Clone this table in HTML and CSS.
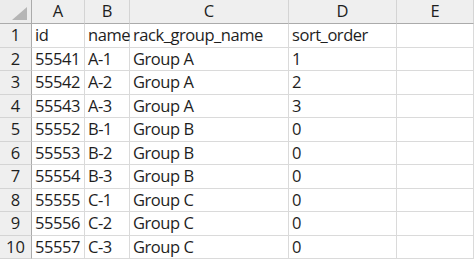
FILE: index.html
```html
<!DOCTYPE html>
<html>
<head>
<meta charset="utf-8">
<link rel="stylesheet" href="styles.css">
</head>
<body>
<div class="sheet">
  <div class="corner"><svg class="tri" width="15" height="13" viewBox="0 0 15 13"><polygon points="15,0 15,13 0,13" fill="#b5b5b5"/></svg></div>
  <div class="colh">A</div><div class="colh">B</div><div class="colh">C</div><div class="colh">D</div><div class="colh">E</div>

  <div class="rowh">1</div><div class="cell">id</div><div class="cell">name</div><div class="cell">rack_group_name</div><div class="cell">sort_order</div><div class="cell"></div>
  <div class="rowh">2</div><div class="cell">55541</div><div class="cell">A-1</div><div class="cell">Group A</div><div class="cell">1</div><div class="cell"></div>
  <div class="rowh">3</div><div class="cell">55542</div><div class="cell">A-2</div><div class="cell">Group A</div><div class="cell">2</div><div class="cell"></div>
  <div class="rowh">4</div><div class="cell">55543</div><div class="cell">A-3</div><div class="cell">Group A</div><div class="cell">3</div><div class="cell"></div>
  <div class="rowh">5</div><div class="cell">55552</div><div class="cell">B-1</div><div class="cell">Group B</div><div class="cell">0</div><div class="cell"></div>
  <div class="rowh">6</div><div class="cell">55553</div><div class="cell">B-2</div><div class="cell">Group B</div><div class="cell">0</div><div class="cell"></div>
  <div class="rowh">7</div><div class="cell">55554</div><div class="cell">B-3</div><div class="cell">Group B</div><div class="cell">0</div><div class="cell"></div>
  <div class="rowh">8</div><div class="cell">55555</div><div class="cell">C-1</div><div class="cell">Group C</div><div class="cell">0</div><div class="cell"></div>
  <div class="rowh">9</div><div class="cell">55556</div><div class="cell">C-2</div><div class="cell">Group C</div><div class="cell">0</div><div class="cell"></div>
  <div class="rowh">10</div><div class="cell">55557</div><div class="cell">C-3</div><div class="cell">Group C</div><div class="cell">0</div><div class="cell"></div>
</div>
</body>
</html>
```
FILE: styles.css
```css
html, body {
  margin: 0;
  padding: 0;
  background: #ffffff;
}
.sheet {
  display: grid;
  grid-template-columns: 32px 53px 45px 159px 108px 77px;
  grid-template-rows: 24px repeat(10, 23.5px);
  width: 474px;
  height: 260px;
  overflow: hidden;
  font-family: "Open Sans", sans-serif;
  font-size: 16.5px;
  color: #1e1e1e;
}
.corner {
  background: #ececec;
  border-right: 1px solid #ababab;
  border-bottom: 1px solid #ababab;
  position: relative;
}
.tri {
  position: absolute;
  right: 4px;
  bottom: 3px;
}
.colh {
  background: #efefef;
  border-right: 1px solid #d4d4d4;
  border-bottom: 1px solid #ababab;
  display: flex;
  align-items: center;
  justify-content: center;
  line-height: 1;
}
.rowh {
  background: #efefef;
  border-right: 1px solid #ababab;
  border-bottom: 1px solid #d4d4d4;
  display: flex;
  align-items: center;
  justify-content: center;
  line-height: 1;
}
.cell {
  border-right: 1px solid #dadada;
  border-bottom: 1px solid #dadada;
  display: flex;
  align-items: center;
  padding-left: 3px;
  white-space: nowrap;
  line-height: 1;
  letter-spacing: -0.45px;
}
```
